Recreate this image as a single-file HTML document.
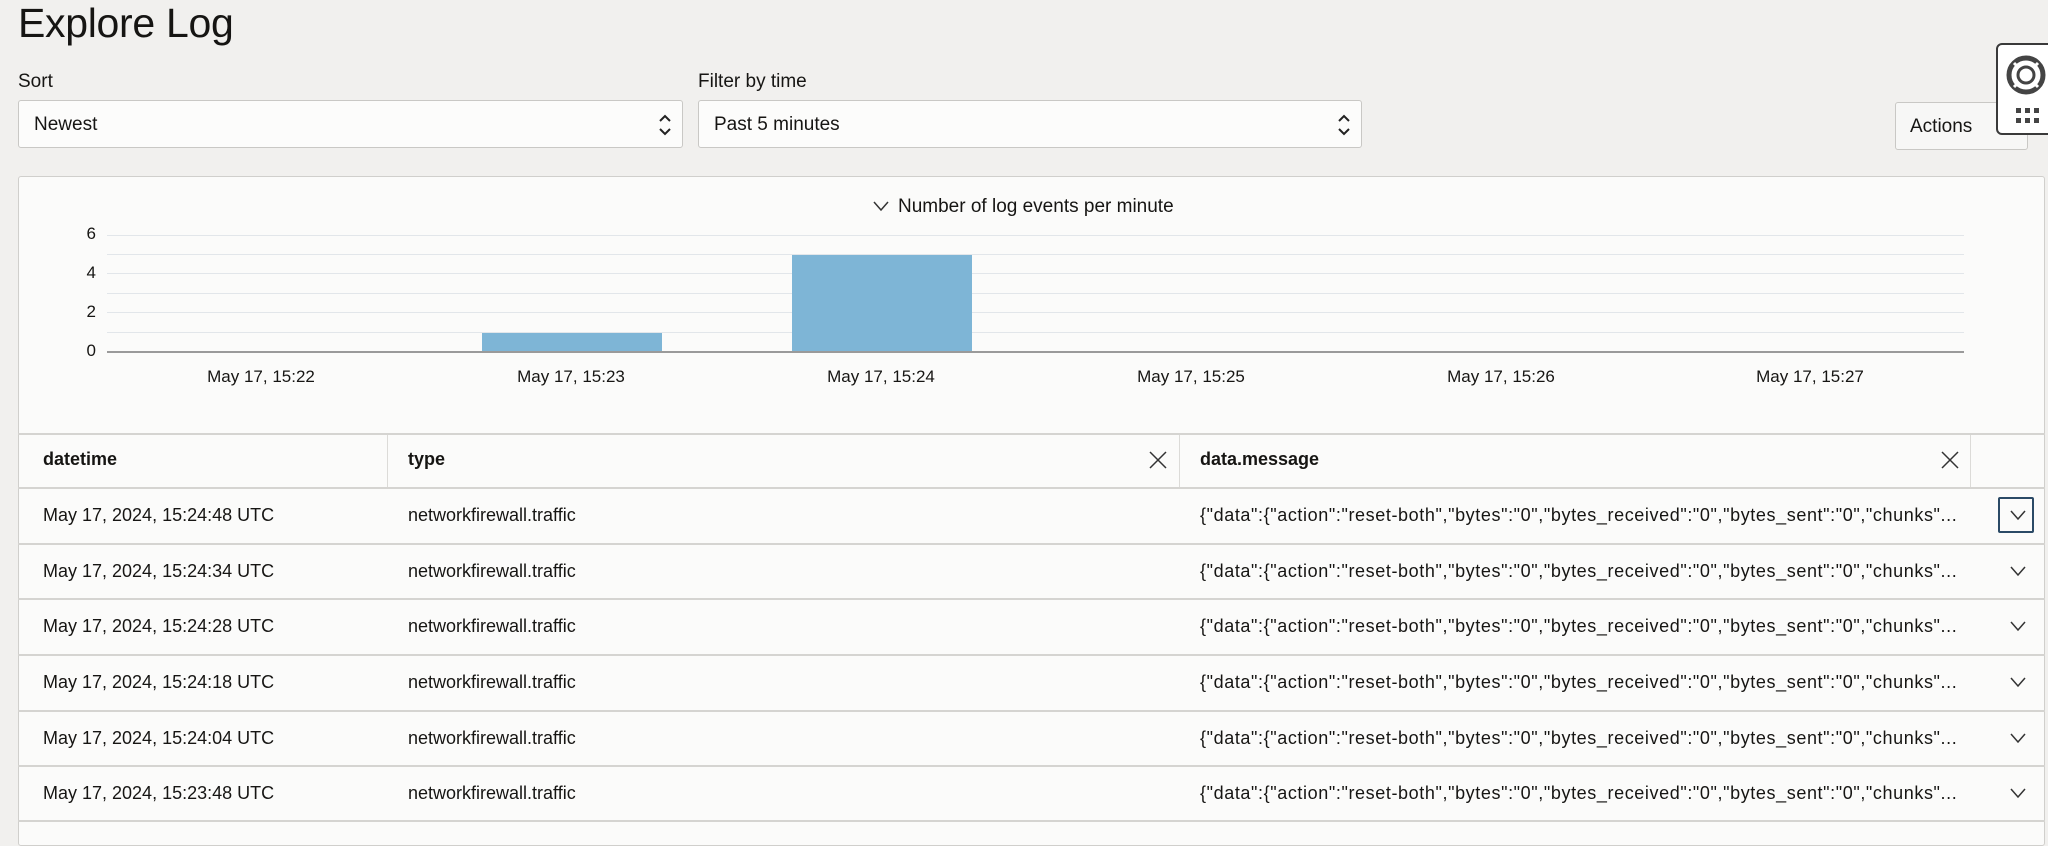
<!DOCTYPE html>
<html><head><meta charset="utf-8"><style>
*{box-sizing:border-box;margin:0;padding:0}
body{width:2048px;height:837px;overflow:hidden;background:#f1f0ee;font-family:"Liberation Sans",sans-serif;color:#161513;position:relative}
.abs{position:absolute}
h1{position:absolute;left:18px;top:0px;font-size:41px;font-weight:400;letter-spacing:-0.3px}
.lbl{position:absolute;top:71px;font-size:19px}
.sel{position:absolute;top:100px;height:48px;background:#fcfcfb;border:1px solid #c9c8c5;border-radius:3px;font-size:19px;padding:13px 15px}
.sel svg{position:absolute;right:9px;top:12px}
.panel{position:absolute;left:18px;top:176px;width:2027px;height:670px;background:#fbfbfa;border:1px solid #d0cfcc;border-radius:3px}
.grid{position:absolute;left:107px;width:1857px;height:1px;background:#e2e6ea}
.yl{position:absolute;left:82px;font-size:17px;width:14px;text-align:right}
.xl{position:absolute;top:367px;font-size:17px;width:200px;text-align:center;margin-left:-100px}
.bar{position:absolute;background:#7eb5d6}
.row{position:absolute;left:18px;width:2027px;border-top:2px solid #d5d4d1;font-size:18px}
.row span{position:absolute;top:16px}
.row span.m{letter-spacing:0.6px}
.chev{position:absolute;left:1990px;top:16px;width:20px;height:20px}
</style></head><body>
<h1>Explore Log</h1>
<div class="lbl" style="left:18px">Sort</div>
<div class="lbl" style="left:698px">Filter by time</div>
<div class="sel" style="left:18px;width:665px">Newest<svg width="16" height="24"><path d="M3 8l5-5 5 5M3 16l5 5 5-5" fill="none" stroke="#222" stroke-width="2"/></svg></div>
<div class="sel" style="left:698px;width:664px">Past 5 minutes<svg width="16" height="24"><path d="M3 8l5-5 5 5M3 16l5 5 5-5" fill="none" stroke="#222" stroke-width="2"/></svg></div>
<div class="abs" style="left:1895px;top:102px;width:133px;height:48px;border:1px solid #c9c8c5;border-radius:3px;background:#f7f7f6;font-size:19px;padding:13px 14px">Actions</div>
<div class="abs" style="left:1996px;top:43px;width:60px;height:92px;border:2px solid #3a3a3a;border-radius:6px;background:#fff">
<svg width="56" height="90" viewBox="0 0 56 90"><circle cx="28" cy="30" r="17" fill="none" stroke="#444" stroke-width="5"/><circle cx="28" cy="30" r="8" fill="none" stroke="#444" stroke-width="3"/><g stroke="#fff" stroke-width="3"><path d="M16 18l5 5M40 18l-5 5M16 42l5-5M40 42l-5-5"/></g><g fill="#444"><rect x="18" y="63" width="5" height="5"/><rect x="27" y="63" width="5" height="5"/><rect x="36" y="63" width="5" height="5"/><rect x="18" y="73" width="5" height="5"/><rect x="27" y="73" width="5" height="5"/><rect x="36" y="73" width="5" height="5"/></g></svg></div>
<div class="panel"></div>
<div class="abs" style="left:872px;top:196px;font-size:19px"><svg width="18" height="12" style="margin-right:8px"><path d="M2 2l7 8 7-8" fill="none" stroke="#333" stroke-width="1.5"/></svg>Number of log events per minute</div>
<div class="grid" style="top:235px"></div><div class="grid" style="top:254px"></div><div class="grid" style="top:273px"></div><div class="grid" style="top:293px"></div><div class="grid" style="top:312px"></div><div class="grid" style="top:332px"></div>
<div class="grid" style="top:351px;background:#9a9a9a;height:2px"></div>
<div class="yl" style="top:224px">6</div><div class="yl" style="top:263px">4</div><div class="yl" style="top:302px">2</div><div class="yl" style="top:341px">0</div>
<div class="bar" style="left:482px;top:333px;width:180px;height:18px"></div>
<div class="bar" style="left:792px;top:255px;width:180px;height:96px"></div>
<div class="xl" style="left:261px">May 17, 15:22</div><div class="xl" style="left:571px">May 17, 15:23</div><div class="xl" style="left:881px">May 17, 15:24</div><div class="xl" style="left:1191px">May 17, 15:25</div><div class="xl" style="left:1501px">May 17, 15:26</div><div class="xl" style="left:1810px">May 17, 15:27</div>
<div class="row" style="top:433px;height:54px;font-weight:700;border-top:2px solid #d5d4d1">
<span style="left:25px;top:14px">datetime</span><span style="left:390px;top:14px">type</span><span style="left:1182px;top:14px">data.message</span>
<div class="abs" style="left:369px;top:0;width:1px;height:52px;background:#dcdbd8"></div>
<div class="abs" style="left:1161px;top:0;width:1px;height:52px;background:#dcdbd8"></div>
<div class="abs" style="left:1952px;top:0;width:1px;height:52px;background:#dcdbd8"></div>
<svg class="abs" style="left:1130px;top:15px" width="20" height="20"><path d="M2 2l16 16M18 2L2 18" stroke="#333" stroke-width="1.5"/></svg>
<svg class="abs" style="left:1922px;top:15px" width="20" height="20"><path d="M2 2l16 16M18 2L2 18" stroke="#333" stroke-width="1.5"/></svg>
</div>
<div class="row" style="top:487px;height:56px"><span style="left:25px">May 17, 2024, 15:24:48 UTC</span><span style="left:390px">networkfirewall.traffic</span><span class="m" style="left:1182px">{"data":{"action":"reset-both","bytes":"0","bytes_received":"0","bytes_sent":"0","chunks"...</span><div class="abs" style="left:1980px;top:8px;width:36px;height:36px;border:2px solid #2b4a66;border-radius:2px"></div><svg class="chev" viewBox="0 0 20 20"><path d="M3 6l7 8 7-8" fill="none" stroke="#333" stroke-width="1.5"/></svg></div>
<div class="row" style="top:543px;height:56px"><span style="left:25px">May 17, 2024, 15:24:34 UTC</span><span style="left:390px">networkfirewall.traffic</span><span class="m" style="left:1182px">{"data":{"action":"reset-both","bytes":"0","bytes_received":"0","bytes_sent":"0","chunks"...</span><svg class="chev" viewBox="0 0 20 20"><path d="M3 6l7 8 7-8" fill="none" stroke="#333" stroke-width="1.5"/></svg></div>
<div class="row" style="top:598px;height:56px"><span style="left:25px">May 17, 2024, 15:24:28 UTC</span><span style="left:390px">networkfirewall.traffic</span><span class="m" style="left:1182px">{"data":{"action":"reset-both","bytes":"0","bytes_received":"0","bytes_sent":"0","chunks"...</span><svg class="chev" viewBox="0 0 20 20"><path d="M3 6l7 8 7-8" fill="none" stroke="#333" stroke-width="1.5"/></svg></div>
<div class="row" style="top:654px;height:56px"><span style="left:25px">May 17, 2024, 15:24:18 UTC</span><span style="left:390px">networkfirewall.traffic</span><span class="m" style="left:1182px">{"data":{"action":"reset-both","bytes":"0","bytes_received":"0","bytes_sent":"0","chunks"...</span><svg class="chev" viewBox="0 0 20 20"><path d="M3 6l7 8 7-8" fill="none" stroke="#333" stroke-width="1.5"/></svg></div>
<div class="row" style="top:710px;height:56px"><span style="left:25px">May 17, 2024, 15:24:04 UTC</span><span style="left:390px">networkfirewall.traffic</span><span class="m" style="left:1182px">{"data":{"action":"reset-both","bytes":"0","bytes_received":"0","bytes_sent":"0","chunks"...</span><svg class="chev" viewBox="0 0 20 20"><path d="M3 6l7 8 7-8" fill="none" stroke="#333" stroke-width="1.5"/></svg></div>
<div class="row" style="top:765px;height:56px"><span style="left:25px">May 17, 2024, 15:23:48 UTC</span><span style="left:390px">networkfirewall.traffic</span><span class="m" style="left:1182px">{"data":{"action":"reset-both","bytes":"0","bytes_received":"0","bytes_sent":"0","chunks"...</span><svg class="chev" viewBox="0 0 20 20"><path d="M3 6l7 8 7-8" fill="none" stroke="#333" stroke-width="1.5"/></svg></div>
<div class="row" style="top:820px;height:20px"></div>
</body></html>
